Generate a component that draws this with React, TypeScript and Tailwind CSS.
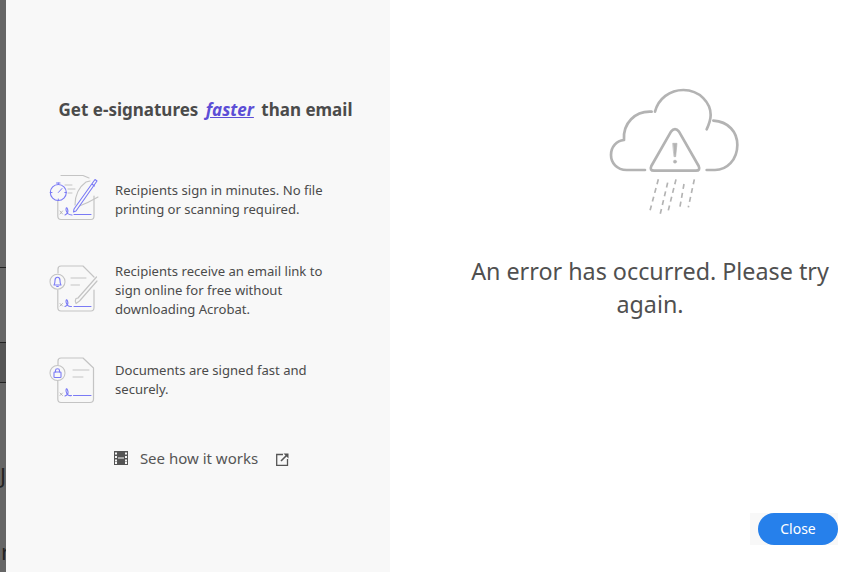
const features = [
  { kind: 'watch', lines: ['Recipients sign in minutes. No file', 'printing or scanning required.'] },
  { kind: 'bell', lines: ['Recipients receive an email link to', 'sign online for free without', 'downloading Acrobat.'] },
  { kind: 'lock', lines: ['Documents are signed fast and', 'securely.'] },
];

// the three small document drawings share one 52x52 frame
function FeatureIcon({ kind }: { kind: string }) {
  const grey = '#c4c4c4';
  const blue = '#7a7af5';
  if (kind === 'watch') {
    return (
      <svg width="52" height="52" viewBox="48 172 52 52" fill="none" strokeLinecap="round" strokeLinejoin="round">
        <path d="M61 175.5 H83 L89 178 M94 196 V216 Q94 219.5 91 219.5 H61 Q57.8 219.5 57.8 216 V201" stroke={grey} strokeWidth="1.2" />
        <path d="M65 185 H72 M68 189 H75 M68 193 H72" stroke={grey} strokeWidth="1" />
        <circle cx="58.3" cy="192.5" r="8" fill="#f8f8f8" stroke={blue} strokeWidth="1.1" />
        <path d="M58.3 192.5 L62 188.5 M56.5 183 H60 M58.3 183 V184.5 M50.3 192.5 H52 M64.8 192.5 H66.3 M58.3 199 V200.5" stroke={blue} strokeWidth="1" />
        <path d="M75 205 Q75 190 86 182 M77 207 Q88 203 98 197 M86 182 L90 181" stroke={grey} strokeWidth="1.1" />
        <path d="M95 179.5 L97 181 L76 211 L73.5 212 L74 209 Z M92 184 L94.5 186" stroke={blue} strokeWidth="1.1" fill="#f8f8f8" />
        <path d="M60 211 L62.5 214 M62.5 211 L60 214" stroke="#aaa" strokeWidth="0.8" />
        <path d="M65 215 Q69 213 67.5 209 Q66 206 66 210 Q67 215 72 215 M74 214.5 H91" stroke={blue} strokeWidth="1.1" />
      </svg>
    );
  }
  if (kind === 'bell') {
    return (
      <svg width="52" height="52" viewBox="48 260 52 52" fill="none" strokeLinecap="round" strokeLinejoin="round">
        <path d="M58 273 V269 Q58 266 61 266 H83 L94 277 M94 290 V307.5 Q94 311 91 311 H61 Q57.8 311 57.8 307.5 V290" stroke={grey} strokeWidth="1.2" />
        <path d="M71 278 H86 M71 285 H79.5" stroke={grey} strokeWidth="1" />
        <circle cx="57.5" cy="281.7" r="7.5" fill="#f8f8f8" stroke={grey} strokeWidth="1.1" />
        <path d="M54 285 Q55 283.5 55 280.5 Q55 277.3 57.5 277.3 Q60 277.3 60 280.5 Q60 283.5 61 285 Z M56.7 286.5 H58.3" stroke={blue} strokeWidth="1.1" />
        <path d="M96.5 277 L78 298 M97 281 L79.5 301 L76 303.5 Q74.5 301 76 298.5 L78 298" stroke={grey} strokeWidth="1.2" fill="#f8f8f8" />
        <path d="M60 303.5 L62.5 306 M62.5 303.5 L60 306" stroke="#aaa" strokeWidth="0.8" />
        <path d="M65 306.5 Q69 305 67.5 301 Q66 298 66 302 Q67 307 71.5 306.5 M74 306.5 H91" stroke={blue} strokeWidth="1.1" />
      </svg>
    );
  }
  return (
    <svg width="52" height="52" viewBox="48 354 52 52" fill="none" strokeLinecap="round" strokeLinejoin="round">
      <path d="M58 365 V361 Q58 358 61 358 H83 L93.5 368 V399 Q93.5 402.5 90 402.5 H61 Q57.8 402.5 57.8 399 V381" stroke={grey} strokeWidth="1.2" />
      <path d="M73 370 H89 M73 377 H83" stroke={grey} strokeWidth="1" />
      <circle cx="57.5" cy="373" r="7.5" fill="#f8f8f8" stroke={grey} strokeWidth="1.1" />
      <rect x="54" y="372" width="7" height="5.5" rx="0.8" stroke={blue} strokeWidth="1.1" />
      <path d="M55.5 372 V370.5 Q55.5 368.7 57.5 368.7 Q59.5 368.7 59.5 370.5 V372" stroke={blue} strokeWidth="1.1" />
      <path d="M60 393 L62.5 395.5 M62.5 393 L60 395.5" stroke="#aaa" strokeWidth="0.8" />
      <path d="M65 396 Q69.5 394.5 67.5 390 Q66 387 66 391 Q67 396.5 71.5 395.5 M73.5 395.5 H91" stroke={blue} strokeWidth="1.1" />
    </svg>
  );
}

function ErrorCloud() {
  return (
    <svg width="150" height="140" viewBox="0 0 450 420" fill="none" stroke="#b3b3b3" strokeLinecap="round" strokeLinejoin="round">
      <path d="M135 270 H80 C50 270 33 248 33 225 C33 200 50 182 72 180 C68 130 105 92 155 95" strokeWidth="8" />
      <path d="M165 95 C175 55 210 30 250 30 C300 30 332 70 332 105 C332 120 326 135 320 148" strokeWidth="8" />
      <path d="M340 122 C385 125 412 155 412 195 C412 240 380 270 345 270 H320" strokeWidth="8" />
      <path d="M213 155 Q225 140 237 155 L296 258 Q302 272 288 272 H162 Q148 272 154 258 Z" strokeWidth="8" />
      <path d="M219 190 H231 L227 230 H223 Z" fill="#b3b3b3" strokeWidth="2" />
      <circle cx="225" cy="245" r="5" fill="#b3b3b3" strokeWidth="1" />
      <g strokeWidth="5" strokeDasharray="15 12" strokeLinecap="butt">
        <path d="M175 298 L150 392" />
        <path d="M203 308 L180 405" />
        <path d="M228 298 L204 395" />
        <path d="M252 312 L240 380" />
        <path d="M283 298 L265 382" />
      </g>
    </svg>
  );
}

export default function App() {
  return (
    <div className="flex h-[572px] w-[865px] overflow-hidden bg-white font-['Noto_Sans',sans-serif] text-[#4b4b4b]">
      {/* dimmed page behind the dialog */}
      <div className="relative flex w-[6px] shrink-0 flex-col overflow-hidden bg-[#666666]">
        <div className="h-[268px] border-b border-[#222222]" />
        <div className="h-[74px]" />
        <div className="h-[41px] border-y border-[#222222] bg-[#555555]" />
        <span className="absolute right-0 top-[462px] text-[22px] leading-[26px] text-[#222222]">J</span>
        <span className="absolute left-[1px] top-[538px] text-[22px] leading-[26px] text-[#222222]">r</span>
      </div>

      <div className="flex w-[384px] shrink-0 flex-col items-center bg-[#f8f8f8] pt-[97px]">
        <h1 className="pl-[15px] text-[17px] font-bold leading-[26px] whitespace-nowrap">
          Get e-signatures{' '}
          <a className="mx-[3px] italic text-[#5c4ed6] underline">faster</a> than email
        </h1>

        <div className="mt-[49px] flex w-full flex-col pl-[42px]">
          <div className="flex h-[88px] items-start gap-[15px]">
            <FeatureIcon kind="watch" />
            <p className="pt-[9px] text-[13.1px] leading-[19px]">
              {features[0].lines.map((l) => <span key={l} className="block whitespace-nowrap">{l}</span>)}
            </p>
          </div>
          <div className="flex h-[94px] items-start gap-[15px]">
            <FeatureIcon kind="bell" />
            <p className="pt-[2px] text-[13.1px] leading-[19px]">
              {features[1].lines.map((l) => <span key={l} className="block whitespace-nowrap">{l}</span>)}
            </p>
          </div>
          <div className="flex items-start gap-[15px]">
            <FeatureIcon kind="lock" />
            <p className="pt-[7px] text-[13.1px] leading-[19px]">
              {features[2].lines.map((l) => <span key={l} className="block whitespace-nowrap">{l}</span>)}
            </p>
          </div>
        </div>

        <div className="mt-[41px] flex items-center pl-[7px] text-[15px] leading-[22px] text-[#555555]">
          <svg width="14" height="14" viewBox="0 0 14 14" className="mr-[12px]">
            <path fill="#555555" fillRule="evenodd" d="M0 0H14V14H0Z M1 1.5V3.5H3V1.5Z M1 5V7H3V5Z M1 8.5V10.5H3V8.5Z M1 11V13H3V11Z M11 1.5V3.5H13V1.5Z M11 5V7H13V5Z M11 8.5V10.5H13V8.5Z M11 11V13H13V11Z M4 6.5H10V7.5H4Z" />
          </svg>
          <span>See how it works</span>
          <svg width="13" height="13" viewBox="0 0 13 13" fill="none" className="ml-[18px] mt-[2px]">
            <path d="M7 1.5 H0.7 V12.3 H11.5 V6" stroke="#555555" strokeWidth="1.3" />
            <path d="M5 8 L11 2" stroke="#555555" strokeWidth="1.6" />
            <path d="M7.5 0.5 H12.5 V5.5 Z" fill="#555555" />
          </svg>
        </div>
      </div>

      <div className="flex flex-1 flex-col">
        <div className="flex justify-center pl-[94px] pt-[80px]">
          <ErrorCloud />
        </div>
        <p className="mt-[35px] ml-[60px] mr-[15px] text-center text-[23.3px] leading-[33px] text-[#505050]">
          An error has occurred. Please try again.
        </p>
        <div className="mt-auto mb-[27px] mr-[27px] flex justify-end">
          <div className="bg-[#f8f8f8] pl-[8px]">
            <button className="h-[32px] w-[80px] rounded-full bg-[#2680eb] pb-[1px] text-[14px] text-white">Close</button>
          </div>
        </div>
      </div>
    </div>
  );
}
